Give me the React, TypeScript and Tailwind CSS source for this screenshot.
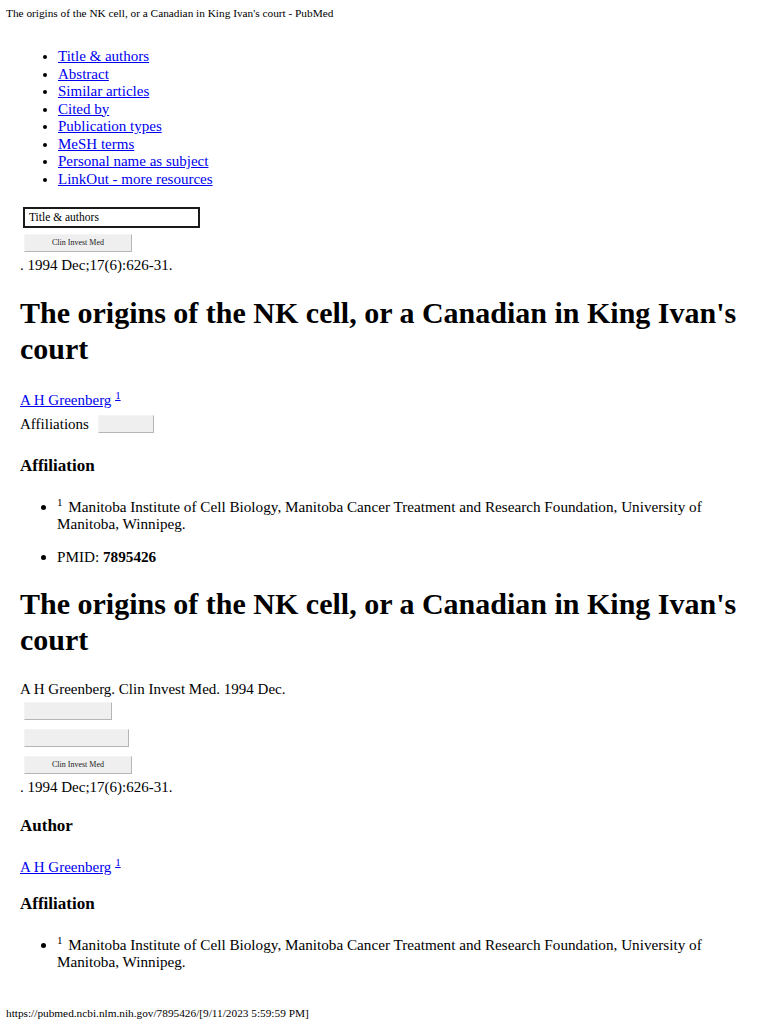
import React from "react";

const serif = { fontFamily: '"Liberation Serif", "Times New Roman", serif' };

function Btn({ w, label }: { w: number; label?: string }) {
  return (
    <div
      className="h-[18px] bg-[#efefef] border border-t-[#f4f4f4] border-l-[#f4f4f4] border-r-[#b5b5b5] border-b-[#b5b5b5] flex items-center justify-center text-[8px] leading-[10px] text-[#222]"
      style={{ width: w }}
    >
      {label}
    </div>
  );
}

function AuthorLink() {
  return (
    <div className="text-[15px] leading-[17px]">
      <a href="#" className="text-[#0000ee] underline">A H Greenberg</a>{" "}
      <a href="#" className="text-[#0000ee] underline text-[11px] relative top-[-6px]">1</a>
    </div>
  );
}

function Title() {
  return (
    <h1 className="text-[30px] leading-[36px] font-bold text-black">
      The origins of the NK cell, or a Canadian in King Ivan's court
    </h1>
  );
}

function AffList({ pmid }: { pmid?: boolean }) {
  return (
    <ul className="list-disc pl-[37px] text-[15.2px] leading-[16px] text-black">
      <li>
        <span className="text-[11px] relative top-[-6px] mr-[2px]">1</span> Manitoba Institute of Cell Biology, Manitoba Cancer Treatment and Research Foundation, University of Manitoba, Winnipeg.
      </li>
      {pmid && (
        <li className="mt-[17px]">
          PMID: <strong>7895426</strong>
        </li>
      )}
    </ul>
  );
}

export default function App() {
  const links = [
    "Title & authors",
    "Abstract",
    "Similar articles",
    "Cited by",
    "Publication types",
    "MeSH terms",
    "Personal name as subject",
    "LinkOut - more resources",
  ];
  return (
    <div className="min-h-[1024px] bg-white text-black flex flex-col" style={serif}>
      <div className="pt-[7px] pl-[6px] text-[11.3px] leading-[12px]">
        The origins of the NK cell, or a Canadian in King Ivan's court - PubMed
      </div>
      <div className="px-[20px]">
        <ul className="list-disc pl-[38px] mt-[29px] text-[15px] leading-[17.5px] marker:text-black">
          {links.map((l) => (
            <li key={l}>
              <a href="#" className="text-[#0000ee] underline">{l}</a>
            </li>
          ))}
        </ul>
        <div className="mt-[19px] ml-[3px] w-[177px] h-[21px] border-2 border-[#1a1a1a] flex items-center pl-[4px] text-[11.5px] leading-[13px]">
          Title &amp; authors
        </div>
        <div className="mt-[6px] ml-[4px]">
          <Btn w={108} label="Clin Invest Med" />
        </div>
        <div className="mt-[5px] text-[15px] leading-[17px]">. 1994 Dec;17(6):626-31.</div>
        <div className="mt-[21px]">
          <Title />
        </div>
        <div className="mt-[25px]">
          <AuthorLink />
        </div>
        <div className="mt-[5px] flex items-center gap-[9px]">
          <span className="text-[15px] leading-[17px]">Affiliations</span>
          <Btn w={56} />
        </div>
        <h3 className="mt-[23px] text-[17px] leading-[20px] font-bold">Affiliation</h3>
        <div className="mt-[23px]">
          <AffList pmid />
        </div>
        <div className="mt-[21px]">
          <Title />
        </div>
        <div className="mt-[23px] text-[15px] leading-[16px]">A H Greenberg. Clin Invest Med. 1994 Dec.</div>
        <div className="ml-[4px] mt-[5px]">
          <Btn w={88} />
        </div>
        <div className="ml-[4px] mt-[9px]">
          <Btn w={105} />
        </div>
        <div className="ml-[4px] mt-[9px]">
          <Btn w={108} label="Clin Invest Med" />
        </div>
        <div className="mt-[5px] text-[15px] leading-[16px]">. 1994 Dec;17(6):626-31.</div>
        <h3 className="mt-[21px] text-[17px] leading-[20px] font-bold">Author</h3>
        <div className="mt-[23px]">
          <AuthorLink />
        </div>
        <h3 className="mt-[17px] text-[17px] leading-[20px] font-bold">Affiliation</h3>
        <div className="mt-[23px]">
          <AffList />
        </div>
      </div>
      <div className="mt-auto pb-[5px] pl-[6px] text-[11.3px] leading-[12px]">
        https://pubmed.ncbi.nlm.nih.gov/7895426/[9/11/2023 5:59:59 PM]
      </div>
    </div>
  );
}
